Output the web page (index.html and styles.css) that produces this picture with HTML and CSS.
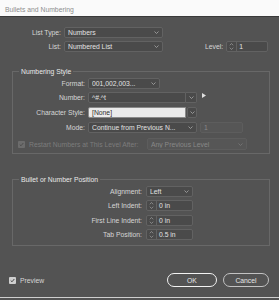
FILE: index.html
```html
<!DOCTYPE html>
<html>
<head>
<meta charset="utf-8">
<link rel="stylesheet" href="styles.css">
</head>
<body>
<div class="title">Bullets and Numbering</div>
<div class="dialog">
  <div class="top">
    <div class="row">
      <span class="lbl">List Type:</span>
      <div class="select w99"><span>Numbers</span><svg class="chev" width="5" height="3" viewBox="0 0 5 3"><polyline points="0.5,0.5 2.5,2.5 4.5,0.5"/></svg></div>
    </div>
    <div class="row">
      <span class="lbl">List:</span>
      <div class="select w99"><span>Numbered List</span><svg class="chev" width="5" height="3" viewBox="0 0 5 3"><polyline points="0.5,0.5 2.5,2.5 4.5,0.5"/></svg></div>
      <span class="level">Level:</span>
      <div class="spin w42"><span class="arrows"><svg width="5" height="9" viewBox="0 0 5 9"><polyline points="0.8,3.3 2.5,1.5 4.2,3.3"/><polyline points="0.8,5.7 2.5,7.5 4.2,5.7"/></svg></span><span class="val">1</span></div>
    </div>
  </div>

  <fieldset class="group g1">
    <legend>Numbering Style</legend>
    <div class="grow first">
      <span class="lbl">Format:</span>
      <div class="select w72"><span>001,002,003...</span><svg class="chev" width="5" height="3" viewBox="0 0 5 3"><polyline points="0.5,0.5 2.5,2.5 4.5,0.5"/></svg></div>
    </div>
    <div class="grow">
      <span class="lbl">Number:</span>
      <div class="combo w109">
        <span class="field dark">^#.^t</span>
        <span class="drop"><svg class="chev" width="5" height="3" viewBox="0 0 5 3"><polyline points="0.5,0.5 2.5,2.5 4.5,0.5"/></svg></span>
      </div>
      <svg class="tri" width="4" height="5" viewBox="0 0 4 5"><polygon points="0,0 4,2.5 0,5"/></svg>
    </div>
    <div class="grow">
      <span class="lbl">Character Style:</span>
      <div class="combo w109">
        <span class="field light">[None]</span>
        <span class="drop sep"><svg class="chev" width="5" height="3" viewBox="0 0 5 3"><polyline points="0.5,0.5 2.5,2.5 4.5,0.5"/></svg></span>
      </div>
    </div>
    <div class="grow">
      <span class="lbl">Mode:</span>
      <div class="select w109"><span>Continue from Previous N...</span><svg class="chev" width="5" height="3" viewBox="0 0 5 3"><polyline points="0.5,0.5 2.5,2.5 4.5,0.5"/></svg></div>
      <div class="numfield disabled">1</div>
    </div>
    <div class="restart">
      <div class="chkwrap">
        <span class="check off"><svg width="5" height="5" viewBox="0 0 5 5"><polyline points="0.7,2.5 2,3.8 4.3,1"/></svg></span>
        <span class="dis">Restart Numbers at This Level After:</span>
      </div>
      <div class="select w100 disabled"><span>Any Previous Level</span><svg class="chev" width="5" height="3" viewBox="0 0 5 3"><polyline points="0.5,0.5 2.5,2.5 4.5,0.5"/></svg></div>
    </div>
  </fieldset>

  <fieldset class="group g2">
    <legend>Bullet or Number Position</legend>
    <div class="prow first">
      <span class="lbl">Alignment:</span>
      <div class="select w47"><span>Left</span><svg class="chev" width="5" height="3" viewBox="0 0 5 3"><polyline points="0.5,0.5 2.5,2.5 4.5,0.5"/></svg></div>
    </div>
    <div class="prow">
      <span class="lbl">Left Indent:</span>
      <div class="spin w47"><span class="arrows"><svg width="5" height="9" viewBox="0 0 5 9"><polyline points="0.8,3.3 2.5,1.5 4.2,3.3"/><polyline points="0.8,5.7 2.5,7.5 4.2,5.7"/></svg></span><span class="val">0 in</span></div>
    </div>
    <div class="prow">
      <span class="lbl">First Line Indent:</span>
      <div class="spin w47"><span class="arrows"><svg width="5" height="9" viewBox="0 0 5 9"><polyline points="0.8,3.3 2.5,1.5 4.2,3.3"/><polyline points="0.8,5.7 2.5,7.5 4.2,5.7"/></svg></span><span class="val">0 in</span></div>
    </div>
    <div class="prow">
      <span class="lbl">Tab Position:</span>
      <div class="spin w47"><span class="arrows"><svg width="5" height="9" viewBox="0 0 5 9"><polyline points="0.8,3.3 2.5,1.5 4.2,3.3"/><polyline points="0.8,5.7 2.5,7.5 4.2,5.7"/></svg></span><span class="val">0.5 in</span></div>
    </div>
  </fieldset>

  <div class="footer">
    <span class="check on"><svg width="5" height="5" viewBox="0 0 5 5"><polyline points="0.7,2.5 2,3.8 4.3,1"/></svg></span>
    <span class="preview">Preview</span>
    <button class="btn ok">OK</button>
    <button class="btn cancel">Cancel</button>
  </div>
</div>
<div class="bottomline"></div>
</body>
</html>
```
FILE: styles.css
```css
* { box-sizing: border-box; }
html, body { margin: 0; padding: 0; }
body {
  width: 279px;
  height: 300px;
  overflow: hidden;
  background: #535353;
  font-family: "Liberation Sans", Arial, sans-serif;
  font-size: 6.8px;
  color: #d6d6d6;
}
.title {
  height: 17px;
  background: #fafafa;
  border-bottom: 1px solid #3a3a3a;
  color: #8e8e8e;
  padding: 6px 0 0 5px;
  line-height: 8px;
}
.dialog { padding: 10px 0 0 0; height: 280px; }

.row { display: flex; align-items: center; height: 11px; }
.row + .row { margin-top: 3px; }
.top .lbl { width: 61px; margin-right: 3px; text-align: right; flex: none; }
.level { margin-left: 42px; margin-right: 3px; }

.select {
  height: 11px;
  background: #4a4a4a;
  border: 1px solid #626262;
  border-radius: 2px;
  display: flex;
  align-items: center;
  padding-left: 3px;
  color: #e2e2e2;
  flex: none;
  white-space: nowrap;
  overflow: hidden;
}
.select span { flex: 1; overflow: hidden; }
.chev { flex: none; margin-right: 3px; }
.chev polyline { fill: none; stroke: #a8a8a8; stroke-width: 0.8; }
.w99 { width: 99px; }
.w72 { width: 72px; }
.w109 { width: 109px; }
.w100 { width: 100px; }
.w47 { width: 47px; }
.w42 { width: 42px; }

.spin {
  height: 11px;
  display: flex;
  align-items: stretch;
  background: #4a4a4a;
  border: 1px solid #626262;
  border-radius: 2px;
  flex: none;
  color: #e2e2e2;
}
.arrows {
  width: 10px;
  border-right: 1px solid #626262;
  display: flex;
  align-items: center;
  justify-content: center;
}
.arrows polyline { fill: none; stroke: #a0a0a0; stroke-width: 0.7; }
.val { display: flex; align-items: center; padding-left: 2px; }

.group {
  margin: 15px 0 0 12px;
  width: 258px;
  border: 1px solid #686868;
  padding: 0 0 3px 0;
  min-width: 0;
}
.group legend {
  margin-left: 6px;
  padding: 0 2px;
  line-height: 9px;
  color: #e8e8e8;
}
.grow { display: flex; align-items: center; height: 11px; margin-top: 3.7px; }
.grow.first { margin-top: 1.5px; }
.g1 .lbl { width: 72px; margin-right: 3px; text-align: right; flex: none; }

.combo { display: flex; height: 11px; flex: none; }
.field {
  flex: 1;
  display: flex;
  align-items: center;
  padding-left: 3px;
  border: 1px solid #626262;
  border-radius: 2px 0 0 2px;
}
.field.dark { background: #4a4a4a; color: #e2e2e2; }
.field.light { background: #ebebeb; color: #303030; border-color: #8a8a8a; }
.drop {
  width: 11px;
  display: flex;
  align-items: center;
  justify-content: center;
  background: #4a4a4a;
  border: 1px solid #626262;
  border-left: none;
  border-radius: 0 2px 2px 0;
}
.drop.sep { border-left: 1px solid #626262; margin-left: 1px; width: 10px; border-radius: 2px; }
.drop .chev { margin: 0; }
.tri { margin-left: 5px; margin-top: -4px; }
.tri polygon { fill: #e0e0e0; }

.numfield {
  width: 43px;
  height: 11px;
  margin-left: 3px;
  padding-left: 3px;
  display: flex;
  align-items: center;
  border: 1px solid #5c5c5c;
  border-radius: 2px;
  background: #565656;
}
.disabled { color: #888; background: #565656; border-color: #5d5d5d; }
.disabled .chev polyline { stroke: #787878; }

.restart { display: flex; align-items: center; height: 12px; margin-top: 5.5px; }
.chkwrap { width: 134px; display: flex; align-items: center; flex: none; }
.check {
  width: 7px;
  height: 7px;
  border-radius: 1px;
  display: flex;
  align-items: center;
  justify-content: center;
  flex: none;
}
.check polyline { fill: none; stroke-width: 1; }
.check.off { background: #6c6c6c; margin-left: 5px; margin-right: 4px; }
.check.off polyline { stroke: #4e4e4e; }
.dis { color: #7c7c7c; }
.restart .select { height: 12px; }

.g2 { margin-top: 21px; padding-bottom: 5px; }
.prow { display: flex; align-items: center; height: 11px; margin-top: 3.5px; }
.prow.first { margin-top: 1.5px; }
.g2 .lbl { width: 129px; margin-right: 4px; text-align: right; flex: none; }

.footer {
  display: flex;
  align-items: center;
  height: 14px;
  margin-top: 27px;
  padding-left: 9px;
}
.check.on { background: #cfcfcf; }
.check.on polyline { stroke: #4a4a4a; }
.preview { margin-left: 4px; color: #d6d6d6; }
.btn {
  height: 14px;
  border-radius: 7px;
  background: transparent;
  font-family: "Liberation Sans", Arial, sans-serif;
  font-size: 6.8px;
  color: #e6e6e6;
  padding: 0;
}
.btn.ok { width: 50px; margin-left: auto; border: 1.5px solid #f2f2f2; }
.btn.cancel { width: 46px; margin-left: 6px; margin-right: 10px; border: 1px solid #c2c2c2; }
.bottomline { height: 1px; background: #cfcfcf; }
```
